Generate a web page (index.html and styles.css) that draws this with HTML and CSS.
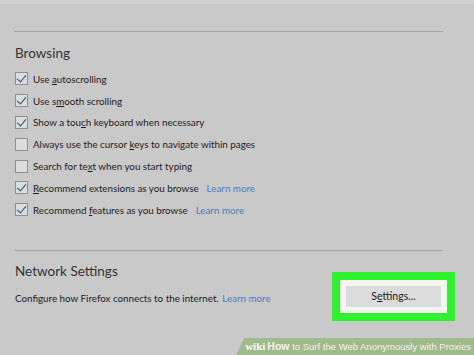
FILE: index.html
```html
<!DOCTYPE html>
<html lang="en">
<head>
    <meta charset="UTF-8">
    <meta name="viewport" content="width=device-width, initial-scale=1.0">
    <title>Firefox Options</title>
    <link rel="stylesheet" href="styles.css">
</head>
<body>
    <div class="top-strip"></div>
    <div class="page">
        <section class="group browsing">
            <h2>Browsing</h2>
            <label class="row"><span class="box checked"></span><span>Use <u>a</u>utoscrolling</span></label>
            <label class="row"><span class="box checked"></span><span>Use s<u>m</u>ooth scrolling</span></label>
            <label class="row"><span class="box checked"></span><span>Show a tou<u>c</u>h keyboard when necessary</span></label>
            <label class="row"><span class="box"></span><span>Always use the cursor <u>k</u>eys to navigate within pages</span></label>
            <label class="row"><span class="box"></span><span>Search for te<u>x</u>t when you start typing</span></label>
            <label class="row"><span class="box checked"></span><span><u>R</u>ecommend extensions as you browse</span><a class="link">Learn more</a></label>
            <label class="row"><span class="box checked"></span><span>Recommend <u>f</u>eatures as you browse</span><a class="link">Learn more</a></label>
        </section>

        <section class="group network">
            <h2>Network Settings</h2>
            <div class="net-row">
                <p>Configure how Firefox connects to the internet. <a class="link">Learn more</a></p>
                <div class="highlight">
                    <div class="focus-ring">
                        <button>S<u>e</u>ttings...</button>
                    </div>
                </div>
            </div>
        </section>
    </div>

    <div class="banner"><b class="wiki">wiki</b><b class="how">How</b> to Surf the Web Anonymously with Proxies</div>
</body>
</html>
```

FILE: styles.css
```css
body {
    margin: 0;
    background-color: #c9c9c9;
    color: #1c1c1c;
    font-family: 'Lato', 'Open Sans', sans-serif;
    font-size: 9.8px;
    height: 355px;
    overflow: hidden;
    position: relative;
}
.top-strip {
    height: 4px;
    background-color: #d1d1d1;
}
.page {
    padding: 0 31px 0 14px;
}
.group {
    border-top: 1px solid #a6a6a6;
}
.browsing {
    margin-top: 27px;
}
.network {
    margin-top: 29px;
}
h2 {
    margin: 0;
    font-weight: normal;
    font-size: 13.5px;
    line-height: 20px;
    color: #333;
    padding: 11px 0 5px 1px;
}
.network h2 {
    padding-top: 10px;
    padding-bottom: 0;
}
.row {
    display: flex;
    align-items: center;
    height: 21.8px;
    padding-left: 1px;
}
.box {
    width: 11px;
    height: 11px;
    border: 1px solid #8f8f8f;
    background-color: #dcdcdc;
    margin-right: 5px;
    position: relative;
    flex: none;
}
.box.checked::after {
    content: "";
    position: absolute;
    left: 3px;
    top: 0px;
    width: 4px;
    height: 8px;
    border: solid #1e4f8c;
    border-width: 0 1.5px 1.5px 0;
    transform: rotate(40deg);
}
u {
    text-decoration-thickness: 1px;
    text-underline-offset: 1px;
}
.link {
    color: #4a7cc0;
    margin-left: 8px;
}
.net-row {
    display: flex;
    align-items: center;
    justify-content: space-between;
    margin: -9px -12px 0 0;
}
.net-row p {
    margin: 0;
    padding: 4px 0 0 1px;
}
.net-row .link {
    margin-left: 1px;
}
.highlight {
    background-color: #2ef22e;
    padding: 8px;
}
.focus-ring {
    background-color: #f4f6f2;
    padding: 6px;
}
button {
    display: block;
    width: 95px;
    height: 21px;
    border: none;
    background-color: #dcdcdc;
    color: #222;
    font-family: inherit;
    font-size: 10.5px;
    padding: 0;
}
.banner {
    position: absolute;
    right: 0;
    bottom: 0;
    height: 17px;
    line-height: 17px;
    padding: 0 3px 0 9px;
    background-color: #9fba8b;
    clip-path: polygon(8px 0, 100% 0, 100% 100%, 0 100%);
    color: #f2f5ee;
    font-family: 'Liberation Sans', Arial, sans-serif;
    font-size: 9.5px;
    white-space: nowrap;
}
.wiki {
    font-family: 'Liberation Serif', serif;
    font-size: 11px;
    color: #fff;
}
.how {
    font-size: 10.5px;
    margin-left: 2px;
}
```
